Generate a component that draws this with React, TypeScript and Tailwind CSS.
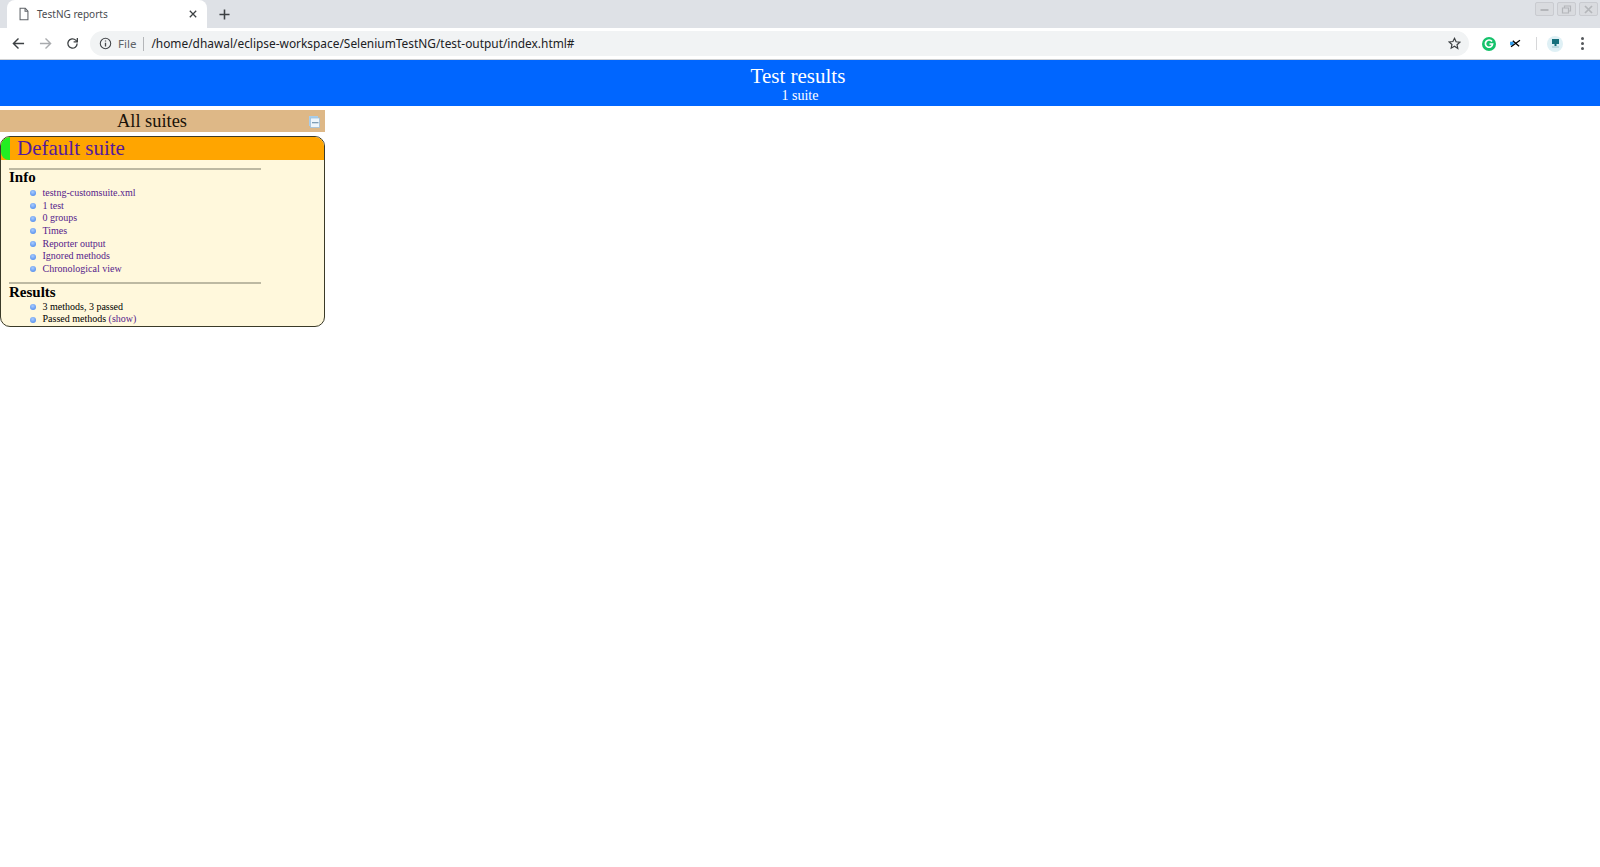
import React from "react";

const serif = "font-['Liberation_Serif',serif]";

function Bullet() {
  return <span className="mr-[6.500px] h-[6px] w-[6px] shrink-0 rounded-full bg-[radial-gradient(circle_at_45%_35%,#a9ccff,#3f7fe8)]" />;
}

function Item({ children, link }: { children: React.ReactNode; link?: boolean }) {
  return (
    <li className={`flex h-[12.67px] items-center leading-[12.67px] ${link ? "text-[#551a8b]" : "text-black"}`}>
      <Bullet />
      <span>{children}</span>
    </li>
  );
}

function TabBar() {
  return (
    <div className="flex h-[28px] items-stretch bg-[#dee1e6] pl-[7px]">
      <div className="flex w-[200px] items-center rounded-t-lg bg-white pl-[10px] pr-[10px]">
        <svg width="14" height="14" viewBox="0 0 16 16" fill="none" stroke="#5f6368" strokeWidth="1.200" className="mr-[6px] shrink-0">
          <path d="M3.500 1.500h6l3 3.200v9.800h-9z" />
          <path d="M9.200 1.500v3.400h3.300" />
        </svg>
        <span className="flex-1 font-['Noto_Sans',sans-serif] text-[10px] text-[#4a4d51]">TestNG reports</span>
        <svg width="8" height="8" viewBox="0 0 10 10" stroke="#3c4043" strokeWidth="1.600">
          <path d="M1 1l8 8M9 1l-8 8" />
        </svg>
      </div>
      <div className="ml-[12px] flex items-center">
        <svg width="11" height="11" viewBox="0 0 12 12" stroke="#3c4043" strokeWidth="1.700">
          <path d="M6 .5v11M.5 6h11" />
        </svg>
      </div>
      <div className="ml-auto mr-[2px] flex gap-[3px] pt-[2px]">
        {[0, 1, 2].map((i) => (
          <div key={i} className="flex h-[14px] w-[19px] items-center justify-center rounded-[2px] border border-[#c9cbd0] bg-[#d9dbdf]">
            <svg width="11" height="9" viewBox="0 0 11 9" fill="none" stroke="#b4b6ba" strokeWidth="1.200">
              {i === 0 && <path d="M1.500 5h8" strokeWidth="2" />}
              {i === 1 && <path d="M1.500 3h6v5h-6zM3.500 3V1h6v5h-2" />}
              {i === 2 && <path d="M2 1l7 7M9 1L2 8" strokeWidth="1.700" />}
            </svg>
          </div>
        ))}
      </div>
    </div>
  );
}

function Toolbar() {
  return (
    <div className="flex h-[32px] items-center border-b border-[#d0d1d3] bg-white">
      <div className="ml-[12px] flex w-[78px] items-center gap-[14px]">
        <svg width="13" height="13" viewBox="0 0 14 14" fill="none" stroke="#3c4043" strokeWidth="1.500">
          <path d="M13 7H2M7 1.500L1.500 7 7 12.500" />
        </svg>
        <svg width="13" height="13" viewBox="0 0 14 14" fill="none" stroke="#a9abae" strokeWidth="1.500">
          <path d="M1 7h11M7 1.500L12.500 7 7 12.500" />
        </svg>
        <svg width="13" height="13" viewBox="0 0 14 14" fill="none" stroke="#3c4043" strokeWidth="1.400">
          <path d="M12 7a5 5 0 1 1-1.500-3.600L12 5" />
          <path d="M12.200 1.200v4h-4" />
        </svg>
      </div>
      <div className="flex h-[25px] w-[1379px] items-center rounded-full bg-[#f1f3f4] pl-[9px] pr-[8px]">
        <svg width="13" height="13" viewBox="0 0 13 13" fill="none" stroke="#44474b" strokeWidth="1.100">
          <circle cx="6.500" cy="6.500" r="5.200" />
          <path d="M6.500 5.800v3.600M6.500 3.400v1.200" strokeWidth="1.300" />
        </svg>
        <span className="ml-[6px] font-['Noto_Sans',sans-serif] text-[11.500px] text-[#5f6368]">File</span>
        <span className="ml-[7px] h-[14px] w-px bg-[#b4b6b9]" />
        <span className="ml-[7px] flex-1 font-['Noto_Sans',sans-serif] text-[11.900px] text-[#202124]">
          /home/dhawal/eclipse-workspace/SeleniumTestNG/test-output/index.html#
        </span>
        <svg width="13" height="13" viewBox="0 0 24 24" fill="none" stroke="#3c4043" strokeWidth="2.200">
          <path d="M12 2.500l2.900 6.300 6.900.8-5.100 4.700 1.400 6.800L12 17.200 5.900 20.600l1.400-6.800L2.200 9.100l6.900-.8z" />
        </svg>
      </div>
      <div className="ml-[13px] flex h-[14px] w-[14px] items-center justify-center rounded-full bg-[#15c26b]">
        <svg width="10" height="10" viewBox="0 0 10 10" fill="none" stroke="white" strokeWidth="1.700">
          <path d="M8 2.600A3.600 3.600 0 1 0 8.600 5H5.500" />
        </svg>
      </div>
      <svg width="11" height="9" viewBox="0 0 12 10" className="ml-[14px]">
        <rect x="0" y="3" width="4" height="4" fill="#2f9ded" />
        <path d="M1 8.500L11 1.500M3 2l7 6" stroke="#000" strokeWidth="1.400" />
      </svg>
      <span className="ml-[15px] h-[13px] w-px bg-[#d6d7d9]" />
      <div className="ml-[10px] flex h-[16px] w-[16px] items-center justify-center rounded-full bg-[#dff0f5]">
        <svg width="9" height="9" viewBox="0 0 9 9">
          <rect x="1" y="0" width="7" height="5" fill="#17707c" />
          <rect x="3.500" y="5" width="2" height="2" fill="#17707c" />
          <rect x="1" y="7.500" width="7" height="1" fill="#9fc4cc" />
        </svg>
      </div>
      <div className="ml-[18px] flex flex-col gap-[2px]">
        <span className="h-[3px] w-[3px] rounded-full bg-[#55585c]" />
        <span className="h-[3px] w-[3px] rounded-full bg-[#55585c]" />
        <span className="h-[3px] w-[3px] rounded-full bg-[#55585c]" />
      </div>
    </div>
  );
}

function Banner() {
  return (
    <div className={`flex h-[46px] flex-col items-center bg-[#0066ff] text-white ${serif}`}>
      <div className="mt-[4px] -translate-x-[2px] text-[21px] leading-[24px]">Test results</div>
      <div className="mt-[1px] text-[14px] leading-[14px]">1 suite</div>
    </div>
  );
}

function Sidebar() {
  return (
    <div className={`w-[325px] pt-[4px] ${serif}`}>
      <div className="flex h-[22px] items-center bg-[#deb887] pt-[1px] text-[18.400px] leading-[21px] text-[#1a1208]">
        <span className="ml-[117px]">All suites</span>
        <svg width="11" height="12" viewBox="0 0 11 12" className="ml-auto mr-[5px]">
          <rect x="0" y="0" width="9" height="10" fill="#a9cdea" />
          <rect x="1.500" y="2" width="9" height="9.500" fill="#eef5fb" stroke="#9dc0dc" strokeWidth="0.800" />
          <rect x="3" y="6" width="6.500" height="1.300" fill="#7d9db6" />
        </svg>
      </div>
      <div className="mt-[4px] h-[191px] overflow-hidden rounded-[10px] border border-[#3a3a28] bg-[#fff8dc]">
        <div className="flex h-[23px] items-center bg-[#ffa500]">
          <div className="h-full w-[9px] rounded-bl-[8px] bg-[#22ee22]" />
          <span className="ml-[7px] text-[21px] leading-[23px] text-[#551a9b]">Default suite</span>
        </div>
        <div className="pl-[8px] text-[10px]">
          <div className="mt-[8px] h-[2px] w-[252px] bg-[#bdb9a2]" />
          <div className="text-[15px] font-bold leading-[15px] text-black">Info</div>
          <ul className="mt-[2px] pl-[21px]">
            <Item link>testng-customsuite.xml</Item>
            <Item link>1 test</Item>
            <Item link>0 groups</Item>
            <Item link>Times</Item>
            <Item link>Reporter output</Item>
            <Item link>Ignored methods</Item>
            <Item link>Chronological view</Item>
          </ul>
          <div className="mt-[6px] h-[2px] w-[252px] bg-[#bdb9a2]" />
          <div className="text-[15px] font-bold leading-[16px] text-black">Results</div>
          <ul className="mt-[1px] pl-[21px]">
            <Item>3 methods, 3 passed</Item>
            <Item>
              Passed methods <span className="text-[#551a8b]">(show)</span>
            </Item>
          </ul>
        </div>
      </div>
    </div>
  );
}

export default function App() {
  return (
    <div className="h-[867px] w-[1600px] overflow-hidden bg-white">
      <TabBar />
      <Toolbar />
      <Banner />
      <Sidebar />
    </div>
  );
}
